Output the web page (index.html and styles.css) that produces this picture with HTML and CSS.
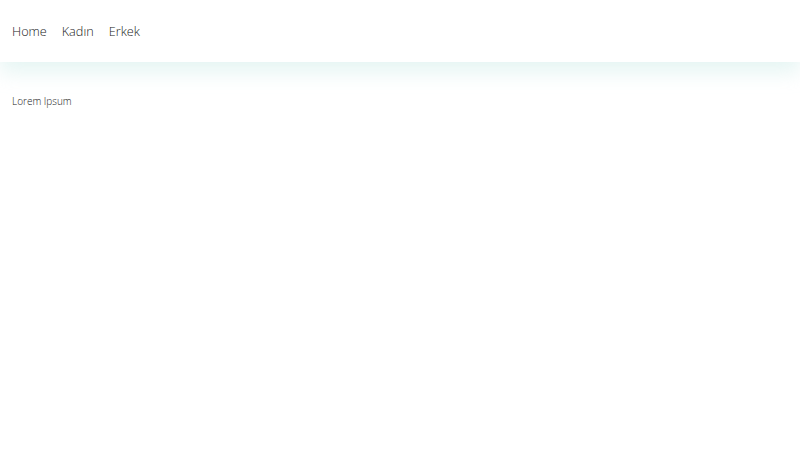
FILE: index.html
```html
<!DOCTYPE html>
<html lang="tr">
<head>
<meta charset="utf-8">
<title>Home</title>
<link rel="stylesheet" href="styles.css">
</head>
<body>
<header class="site-header">
  <nav class="nav">
    <a class="nav-link" href="#">Home</a>
    <a class="nav-link" href="#">Kadın</a>
    <a class="nav-link" href="#">Erkek</a>
  </nav>
</header>
<main class="content">
  <p class="text">Lorem Ipsum</p>
</main>
</body>
</html>
```
FILE: styles.css
```css
html, body {
  margin: 0;
  padding: 0;
  background: #ffffff;
  font-family: "Open Sans", "Noto Sans", sans-serif;
}
.site-header {
  height: 62px;
  display: flex;
  align-items: center;
  padding: 0 12px;
  background: #ffffff;
  box-shadow: 0 10px 20px rgba(190, 230, 225, 0.4);
  position: relative;
}
.nav {
  display: flex;
  gap: 15px;
}
.nav-link {
  color: #222222;
  text-decoration: none;
  font-size: 12.7px;
  font-weight: 300;
}
.content {
  padding: 32px 12px 0;
}
.text {
  margin: 0;
  font-size: 10px;
  font-weight: 300;
  color: #222;
}
```
